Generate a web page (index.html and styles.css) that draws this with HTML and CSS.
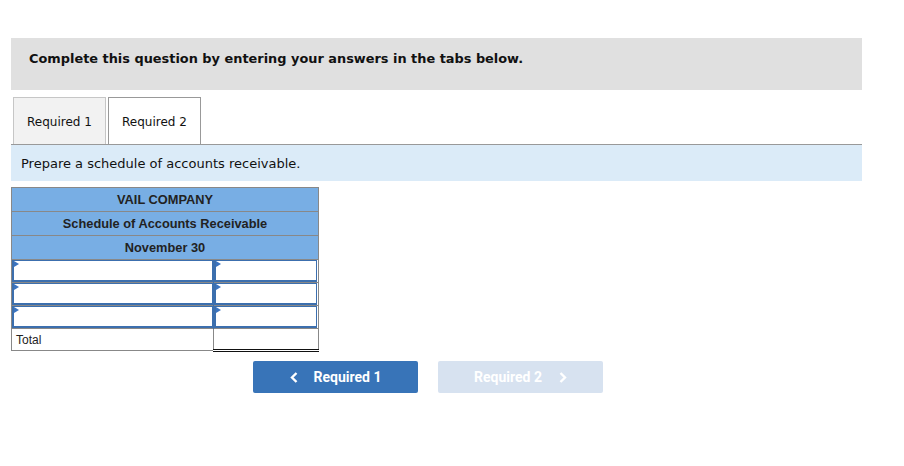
FILE: index.html
```html
<!DOCTYPE html>
<html>
<head>
<meta charset="utf-8">
<link rel="stylesheet" href="styles.css">
</head>
<body>
<div class="page">
  <div class="banner">Complete this question by entering your answers in the tabs below.</div>
  <div class="tabs">
    <div class="tab">Required 1</div>
    <div class="tab active">Required 2</div>
  </div>
  <div class="prompt">Prepare a schedule of accounts receivable.</div>
  <table class="sched">
    <colgroup><col class="w1"><col class="w2"></colgroup>
    <tr><th colspan="2">VAIL COMPANY</th></tr>
    <tr><th colspan="2">Schedule of Accounts Receivable</th></tr>
    <tr><th colspan="2">November 30</th></tr>
    <tr class="inrow"><td><div class="inp l"><span class="flag"></span></div></td><td><div class="inp r"><span class="flag"></span></div></td></tr>
    <tr class="inrow"><td><div class="inp l"><span class="flag"></span></div></td><td><div class="inp r"><span class="flag"></span></div></td></tr>
    <tr class="inrow"><td><div class="inp l"><span class="flag"></span></div></td><td><div class="inp r"><span class="flag"></span></div></td></tr>
    <tr class="total"><td class="lbl">Total</td><td class="tot"></td></tr>
  </table>
  <div class="nav">
    <button class="btn prev"><svg class="chev" width="8" height="11" viewBox="0 0 8 11"><polyline points="6.5,1 2,5.5 6.5,10" fill="none" stroke="#fff" stroke-width="2.4"/></svg><span>Required 1</span></button>
    <button class="btn next"><span>Required 2</span><svg class="chev" width="8" height="11" viewBox="0 0 8 11"><polyline points="1.5,1 6,5.5 1.5,10" fill="none" stroke="#fff" stroke-width="2.4"/></svg></button>
  </div>
</div>
</body>
</html>
```
FILE: styles.css
```css
html, body { margin: 0; padding: 0; background: #fff; }
body { font-family: "DejaVu Sans", Verdana, sans-serif; color: #111; }
.page { padding: 38px 42px 0 11px; }
.banner {
  background: #e0e0e0;
  height: 52px;
  box-sizing: border-box;
  padding: 13px 0 0 18px;
  font-weight: bold;
  font-size: 12.9px;
  color: #111;
}
.tabs {
  display: flex;
  gap: 2px;
  margin-top: 7px;
  padding-left: 2px;
  border-bottom: 1px solid #999;
}
.tab {
  width: 93px;
  height: 47px;
  box-sizing: border-box;
  border: 1px solid #c6c6c6;
  border-bottom: none;
  background: #f2f2f2;
  font-size: 12px;
  display: flex;
  align-items: center;
  justify-content: center;
  padding-top: 2px;
}
.tab.active { background: #fff; border-color: #999; }
.prompt {
  background: #dbebf8;
  height: 36px;
  box-sizing: border-box;
  padding: 11px 0 0 10px;
  font-size: 13px;
}
.sched {
  margin-top: 6px;
  width: 307px;
  table-layout: fixed;
  border-collapse: collapse;
  font-family: "Liberation Sans", Arial, sans-serif;
  font-size: 12.8px;
  border: 1px solid #888;
}
.w1 { width: 202px; }
.w2 { width: 105px; }
.sched th {
  background: #78aee4;
  color: #222;
  font-weight: bold;
  height: 23px;
  padding: 0;
  border: 1px solid #888;
  vertical-align: middle;
}
.sched td { padding: 0; border-top: 1px solid #888; }
.inrow td { line-height: 0; }
.inrow td + td { border-left: 1px solid #3c6fae; }
.inp {
  position: relative;
  height: 22px;
  box-sizing: border-box;
  border: 1px solid #3c6fae;
  border-left-width: 2px;
  border-bottom-width: 2px;
  background: #fff;
}
.inp.r { margin-right: 1px; }
.flag {
  position: absolute;
  left: 0; top: 0;
  width: 0; height: 0;
  border-top: 3.5px solid transparent;
  border-bottom: 3.5px solid transparent;
  border-left: 5px solid #3b74c0;
}
.total td { height: 20px; }
.lbl { padding-left: 4px !important; font-size: 12px; color: #222; vertical-align: middle; }
.tot { border-left: 1px solid #888; border-bottom: 3px double #111; }
.nav {
  display: flex;
  gap: 20px;
  margin-top: 9px;
  padding-left: 242px;
}
.btn {
  width: 165px;
  height: 32px;
  border: none;
  border-radius: 2px;
  font-family: Roboto, "Liberation Sans", sans-serif;
  font-weight: bold;
  font-size: 14px;
  color: #fff;
  display: flex;
  align-items: center;
  justify-content: center;
  gap: 16px;
  padding: 0;
}
.btn.prev { background: #3874b8; }
.btn.next { background: #d7e2f0; gap: 17px; }
.chev { display: block; }
```
